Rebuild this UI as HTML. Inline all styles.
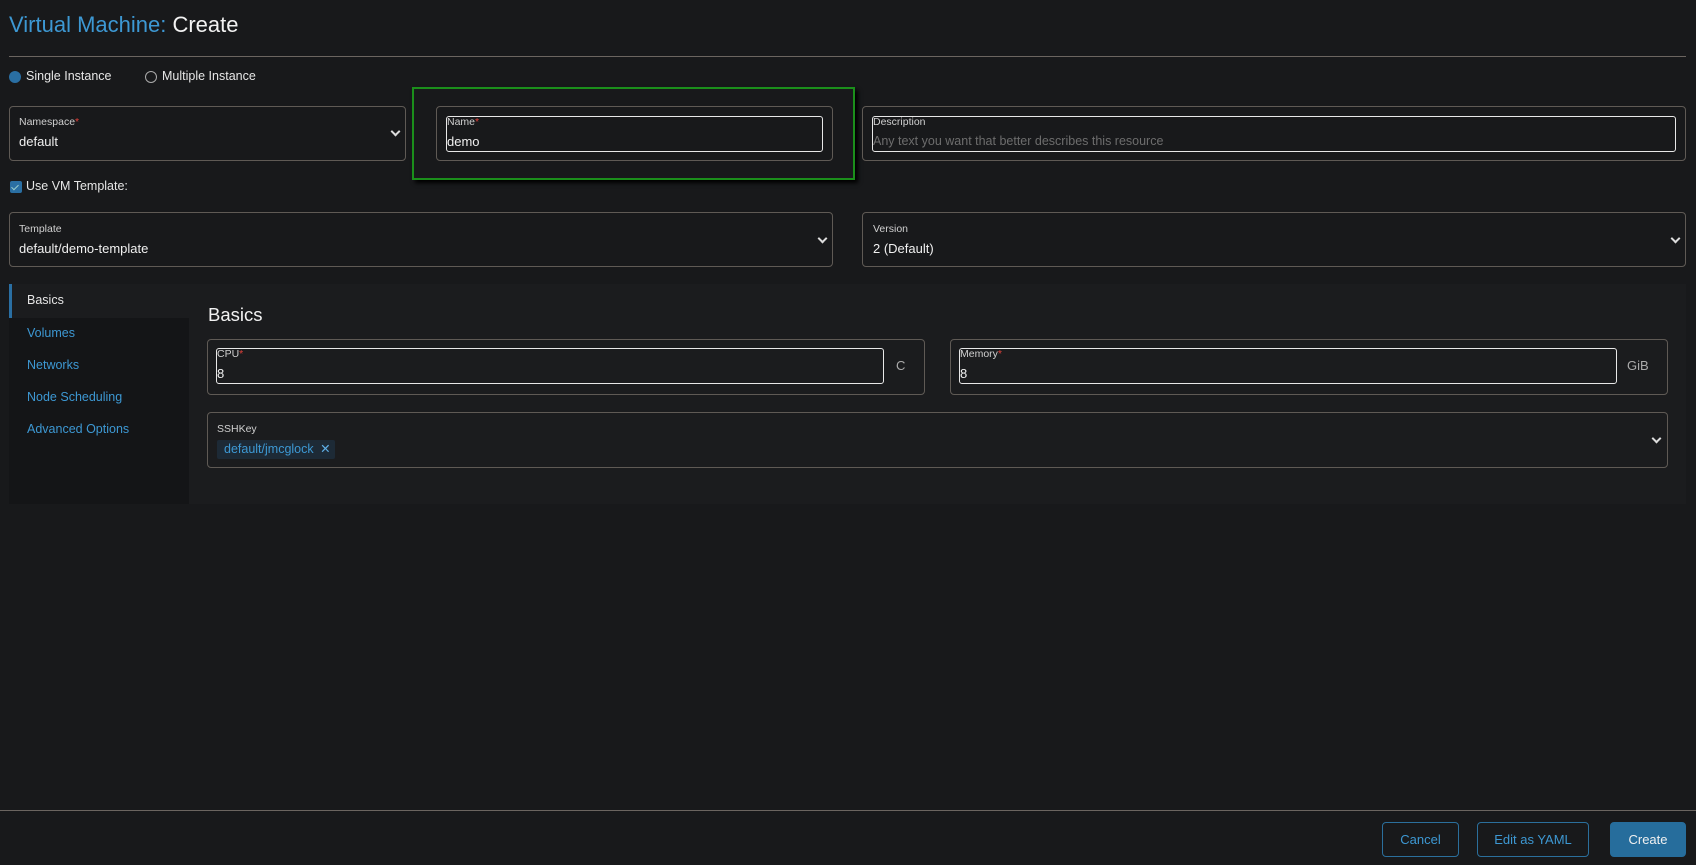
<!DOCTYPE html>
<html><head><meta charset="utf-8"><style>
*{box-sizing:border-box;margin:0;padding:0}
body{width:1696px;height:865px;background:#18191b;font-family:"Liberation Sans",sans-serif;color:#e6e6e6;position:relative;overflow:hidden;font-size:12.5px}
.a{position:absolute}
.box{position:absolute;border:1px solid #5f5a55;border-radius:4px}
.lbl{position:absolute;font-size:10.5px;color:#d0d0d0}
.val{position:absolute;font-size:13px;color:#f0f0f0}
.req{color:#e0403a}
.inner{position:absolute;border:1.5px solid #e8e8e8;border-radius:3px}
.chev{position:absolute;width:7px;height:7px;border-right:2px solid #ddd;border-bottom:2px solid #ddd;transform:rotate(45deg)}
.blue{color:#3d98d3}
.btn{position:absolute;border:1px solid #2b6f9c;border-radius:4px;color:#3d98d3;font-size:13px;text-align:center;line-height:33px}
</style></head><body>
<div class="a" style="left:9px;top:12px;font-size:22px"><span class="blue">Virtual Machine:</span> <span style="color:#f2f2f2">Create</span></div>
<div class="a" style="left:9px;top:56px;width:1677px;height:1px;background:#6b6560"></div>

<div class="a" style="left:9px;top:71px;width:12px;height:12px;border-radius:50%;background:#2a6fa3"></div>
<div class="a" style="left:26px;top:69px">Single Instance</div>
<div class="a" style="left:145px;top:71px;width:12px;height:12px;border-radius:50%;border:1px solid #aaa"></div>
<div class="a" style="left:162px;top:69px">Multiple Instance</div>

<div class="box" style="left:9px;top:106px;width:397px;height:55px"></div>
<div class="lbl" style="left:19px;top:116px">Namespace<span class="req">*</span></div>
<div class="val" style="left:19px;top:134px">default</div>
<div class="chev" style="left:392px;top:128px"></div>

<div class="a" style="left:412px;top:87px;width:443px;height:93px;border:2.5px solid #1b8f1b;box-shadow:3px 3px 4px #000"></div>
<div class="box" style="left:436px;top:106px;width:397px;height:55px"></div>
<div class="inner" style="left:446px;top:116px;width:377px;height:36px"></div>
<div class="lbl" style="left:447px;top:116px">Name<span class="req">*</span></div>
<div class="val" style="left:447px;top:134px">demo</div>

<div class="box" style="left:862px;top:106px;width:824px;height:55px"></div>
<div class="inner" style="left:872px;top:116px;width:804px;height:36px"></div>
<div class="lbl" style="left:873px;top:116px">Description</div>
<div class="val" style="left:873px;top:134px;color:#6d6d6d;font-size:12.5px">Any text you want that better describes this resource</div>

<div class="a" style="left:10px;top:181px;width:12px;height:12px;border-radius:2px;background:#2a6fa3"></div>
<div class="a" style="left:13px;top:183px;width:4px;height:7px;border-right:1px solid #9cc;border-bottom:1px solid #9cc;transform:rotate(45deg)"></div>
<div class="a" style="left:26px;top:179px">Use VM Template:</div>

<div class="box" style="left:9px;top:212px;width:824px;height:55px"></div>
<div class="lbl" style="left:19px;top:223px">Template</div>
<div class="val" style="left:19px;top:241px">default/demo-template</div>
<div class="chev" style="left:819px;top:235px"></div>
<div class="box" style="left:862px;top:212px;width:824px;height:55px"></div>
<div class="lbl" style="left:873px;top:223px">Version</div>
<div class="val" style="left:873px;top:241px">2 (Default)</div>
<div class="chev" style="left:1672px;top:235px"></div>

<div class="a" style="left:9px;top:284px;width:1677px;height:220px;background:#1b1c1e"></div>
<div class="a" style="left:9px;top:318px;width:180px;height:186px;background:#141517"></div>
<div class="a" style="left:9px;top:284px;width:3px;height:34px;background:#2a6fa3"></div>
<div class="a" style="left:27px;top:293px">Basics</div>
<div class="a blue" style="left:27px;top:326px">Volumes</div>
<div class="a blue" style="left:27px;top:358px">Networks</div>
<div class="a blue" style="left:27px;top:390px">Node Scheduling</div>
<div class="a blue" style="left:27px;top:422px">Advanced Options</div>

<div class="a" style="left:208px;top:304px;font-size:18.5px;color:#f2f2f2">Basics</div>

<div class="box" style="left:207px;top:339px;width:718px;height:56px"></div>
<div class="inner" style="left:216px;top:348px;width:668px;height:36px"></div>
<div class="lbl" style="left:217px;top:348px">CPU<span class="req">*</span></div>
<div class="val" style="left:217px;top:366px">8</div>
<div class="a" style="left:896px;top:358px;color:#aaa;font-size:13px">C</div>

<div class="box" style="left:950px;top:339px;width:718px;height:56px"></div>
<div class="inner" style="left:959px;top:348px;width:658px;height:36px"></div>
<div class="lbl" style="left:960px;top:348px">Memory<span class="req">*</span></div>
<div class="val" style="left:960px;top:366px">8</div>
<div class="a" style="left:1627px;top:358px;color:#aaa;font-size:13px">GiB</div>

<div class="box" style="left:207px;top:412px;width:1461px;height:56px"></div>
<div class="lbl" style="left:217px;top:423px">SSHKey</div>
<div class="a" style="left:217px;top:440px;width:118px;height:19px;background:#1d2a36;border-radius:2px;color:#3d98d3;font-size:12.5px;line-height:19px;padding-left:7px">default/jmcglock <span style="color:#5fb0e8;margin-left:3px">✕</span></div>
<div class="chev" style="left:1653px;top:435px"></div>

<div class="a" style="left:0;top:810px;width:1696px;height:1px;background:#6b6560"></div>
<div class="btn" style="left:1382px;top:822px;width:77px;height:35px">Cancel</div>
<div class="btn" style="left:1477px;top:822px;width:112px;height:35px">Edit as YAML</div>
<div class="btn" style="left:1610px;top:822px;width:76px;height:35px;background:#266d9c;border-color:#266d9c;color:#f0f0f0">Create</div>
</body></html>
